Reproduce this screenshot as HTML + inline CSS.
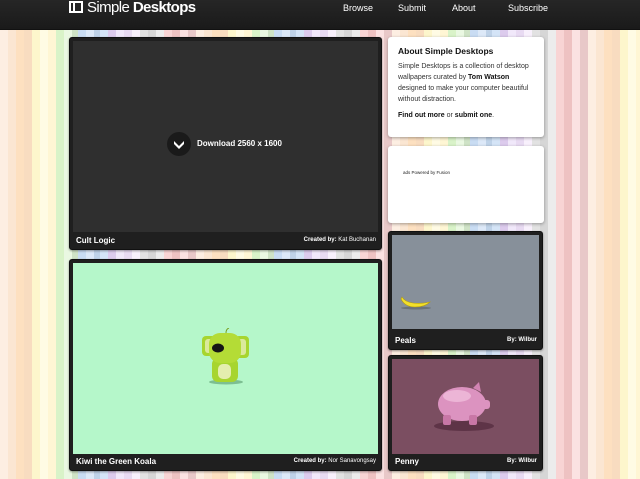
<!DOCTYPE html>
<html><head><style>
*{margin:0;padding:0;box-sizing:border-box}
body{width:640px;height:479px;overflow:hidden;position:relative;font-family:"Liberation Sans",sans-serif;
background:repeating-linear-gradient(90deg,
#fdeee2 0,#fdeee2 8px,#fbe6d2 8px,#fbe6d2 16px,#fde0c0 16px,#fde0c0 24px,#f8dcc0 24px,#f8dcc0 32px,
#fdf6cc 32px,#fdf6cc 40px,#fffbe4 40px,#fffbe4 48px,#fff6d4 48px,#fff6d4 56px,
#d9f3c8 56px,#d9f3c8 64px,#eaf8e2 64px,#eaf8e2 72px,#cfe3c6 72px,#cfe3c6 78px,
#c9dcf3 78px,#c9dcf3 86px,#dde9f8 86px,#dde9f8 94px,#bfd2e8 94px,#bfd2e8 100px,#d4e4f7 100px,#d4e4f7 108px,
#dccbed 108px,#dccbed 116px,#f1e8fa 116px,#f1e8fa 124px,#e8daf2 124px,#e8daf2 132px,#f8f0fc 132px,#f8f0fc 140px,
#e2e2e2 140px,#e2e2e2 148px,#d6d6d6 148px,#d6d6d6 156px,#ececec 156px,#ececec 164px,
#f8d4d4 164px,#f8d4d4 172px,#eec2c2 172px,#eec2c2 180px,#fbe2e2 180px,#fbe2e2 188px,#e8c8c8 188px,#e8c8c8 196px) ;}
.hdr{position:absolute;left:0;top:0;width:640px;height:30px;background:linear-gradient(#262626,#1a1a1a);border-bottom:1px solid #111}
.logo{position:absolute;left:69px;top:-1px;color:#fff;font-size:15px;letter-spacing:-0.6px}
.logo b{font-weight:bold}
.logo i{display:inline-block;width:14px;height:12px;border:2px solid #fff;vertical-align:-1px;margin-right:4px;position:relative}
.logo i:after{content:"";position:absolute;left:2px;top:0;width:2px;height:8px;background:#fff}
.nav{position:absolute;top:3px;color:#fff;font-size:9px}
.card{position:absolute;background:#1f1f1f;border:1px solid #111;border-radius:3px;box-shadow:0 1px 2px rgba(0,0,0,.4)}
.img{position:absolute;left:3px;top:3px;right:3px}
.ft{position:absolute;left:6px;right:5px;bottom:4px;color:#fff;font-size:8px;font-weight:bold}
.ft span{float:right;font-size:6px;margin-top:1px}
.box{position:absolute;background:#fff;border-radius:3px;box-shadow:0 1px 3px rgba(0,0,0,.35)}
</style></head><body>
<div class="hdr">
<div class="logo"><i></i>Simple <b>Desktops</b></div>
<div class="nav" style="left:343px">Browse</div>
<div class="nav" style="left:398px">Submit</div>
<div class="nav" style="left:452px">About</div>
<div class="nav" style="left:508px">Subscribe</div>
</div>

<div class="card" style="left:69px;top:37px;width:313px;height:213px">
<div class="img" style="height:191px;background:#2f2f2f"></div>
<div style="position:absolute;left:97px;top:94px;width:24px;height:24px;border-radius:12px;background:#1a1a1a"></div>
<svg style="position:absolute;left:103px;top:101px" width="12" height="11"><path d="M1 2 L6 7 L11 2 L11 5 L6 10 L1 5Z" fill="#fff"/></svg>
<div style="position:absolute;left:127px;top:101px;color:#fff;font-size:8px;font-weight:bold">Download 2560 x 1600</div>
<div class="ft">Cult Logic<span>Created by: <span style="float:none;font-weight:normal">Kat Buchanan</span></span></div>
</div>

<div class="card" style="left:69px;top:259px;width:313px;height:212px">
<div class="img" style="height:191px;background:#b5f7ca"></div>
<svg style="position:absolute;left:132px;top:68px" width="50" height="58" viewBox="0 0 50 58">
<ellipse cx="24" cy="54" rx="17" ry="2.5" fill="#7dbf92"/>
<rect x="10" y="30" width="26" height="24" rx="6" fill="#a7d52f"/>
<rect x="16" y="36" width="13" height="15" rx="5" fill="#e4eeae"/>
<rect x="0" y="8" width="14" height="20" rx="4" fill="#a7d52f"/><rect x="3" y="11" width="8" height="14" rx="3" fill="#dbe99b"/>
<rect x="33" y="8" width="14" height="22" rx="4" fill="#a7d52f"/><rect x="36" y="11" width="8" height="16" rx="3" fill="#dbe99b"/>
<rect x="7" y="5" width="32" height="30" rx="11" fill="#b4dc36"/>
<ellipse cx="16" cy="20" rx="6" ry="4.5" fill="#151515"/>
<path d="M24 5 q0 -4 3 -5" stroke="#7aa020" fill="none"/>
</svg>
<div class="ft">Kiwi the Green Koala<span>Created by: <span style="float:none;font-weight:normal">Nor Sanavongsay</span></span></div>
</div>

<div class="box" style="left:388px;top:37px;width:156px;height:100px;padding:9px 10px;font-size:7px;line-height:11px;color:#333">
<div style="font-size:8.5px;font-weight:bold;color:#111;margin-bottom:4px">About Simple Desktops</div>
Simple Desktops is a collection of desktop wallpapers curated by <b style="color:#111">Tom Watson</b> designed to make your computer beautiful without distraction.
<div style="margin-top:5px"><b style="color:#111">Find out more</b> or <b style="color:#111">submit one</b>.</div>
</div>
<div class="box" style="left:388px;top:146px;width:156px;height:77px">
<div style="position:absolute;left:15px;top:24px;font-size:4.5px;color:#222">ads Powered by Fusion</div>
</div>

<div class="card" style="left:388px;top:231px;width:155px;height:119px">
<div class="img" style="height:94px;background:#87909a"></div>
<svg style="position:absolute;left:10px;top:64px" width="34" height="14"><ellipse cx="17" cy="12" rx="15" ry="1.5" fill="#6b737b"/><path d="M2 3 Q6 11 16 11 Q26 11 31 6 Q22 8 14 7 Q6 6 3 1Z" fill="#f2e02a" stroke="#b59d10" stroke-width=".6"/></svg>
<div class="ft">Peals<span style="font-size:6px">By: Wilbur</span></div>
</div>

<div class="card" style="left:388px;top:355px;width:155px;height:116px">
<div class="img" style="height:95px;background:#7b4e61"></div>
<svg style="position:absolute;left:40px;top:24px" width="70" height="52" viewBox="0 0 70 52">
<ellipse cx="35" cy="46" rx="30" ry="5" fill="#5e3447"/>
<ellipse cx="33" cy="24" rx="24" ry="17" fill="#dc93c0"/>
<ellipse cx="28" cy="16" rx="14" ry="6" fill="#ecb5d6"/>
<path d="M44 8 L50 2 L52 12Z" fill="#d284b3"/>
<rect x="52" y="20" width="9" height="9" rx="3" fill="#dc93c0"/>
<rect x="14" y="35" width="8" height="10" rx="2" fill="#c877a6"/><rect x="40" y="35" width="8" height="10" rx="2" fill="#c877a6"/>
</svg>
<div class="ft">Penny<span style="font-size:6px">By: Wilbur</span></div>
</div>
</body></html>
